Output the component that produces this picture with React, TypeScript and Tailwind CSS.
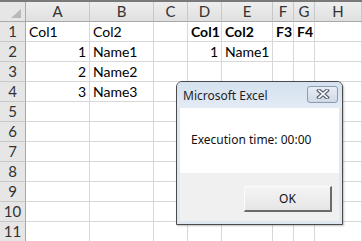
const cols = ["A", "B", "C", "D", "E", "F", "G", "H"];

type Cell = { text: string; align?: "right"; bold?: boolean };

const data: Record<number, Record<string, Cell>> = {
  1: {
    A: { text: "Col1" },
    B: { text: "Col2" },
    D: { text: "Col1", bold: true },
    E: { text: "Col2", bold: true },
    F: { text: "F3", bold: true },
    G: { text: "F4", bold: true },
  },
  2: {
    A: { text: "1", align: "right" },
    B: { text: "Name1" },
    D: { text: "1", align: "right" },
    E: { text: "Name1" },
  },
  3: { A: { text: "2", align: "right" }, B: { text: "Name2" } },
  4: { A: { text: "3", align: "right" }, B: { text: "Name3" } },
};

const rows = Array.from({ length: 11 }, (_, i) => i + 1);

function CloseGlyph() {
  return (
    <svg width="14" height="10" viewBox="0 0 14 10">
      <path d="M3 1.5 L11 8.5 M11 1.5 L3 8.5" stroke="#5d6675" strokeWidth="4" strokeLinecap="square" />
      <path d="M3 1.5 L11 8.5 M11 1.5 L3 8.5" stroke="#ffffff" strokeWidth="1.6" strokeLinecap="square" />
    </svg>
  );
}

function MessageBox() {
  return (
    <div className="absolute left-[176px] top-[81px] w-[167px] h-[144px] rounded-t-[6px] border border-[#4a4a4a] bg-[#dfe7f1] flex flex-col shadow-[1px_1px_2px_rgba(0,0,0,0.25)] font-['Noto_Sans',sans-serif]">
      <div className="h-[26px] flex items-center justify-between pl-[6px] pr-[4px] rounded-t-[5px] bg-gradient-to-b from-[#d5e1ef] to-[#e3ebf5]">
        <span className="text-[12px] text-[#1e1e1e] mt-[2px]">Microsoft Excel</span>
        <div className="w-[31px] h-[17px] rounded-[3px] border border-[#8d9bae] bg-gradient-to-b from-[#e9eef5] to-[#cfd9e6] flex items-center justify-center mb-[2px]">
          <CloseGlyph />
        </div>
      </div>
      <div className="flex-1 mx-[3px] mb-[3px] flex flex-col">
        <div className="h-[65px] bg-white flex items-center pl-[11px] pb-[2px]">
          <span className="text-[12px] text-[#111]">Execution time: 00:00</span>
        </div>
        <div className="flex-1 bg-[#f0f0f0] flex items-start justify-end pt-[13px] pr-[7px]">
          <div className="w-[88px] h-[26px] bg-gradient-to-b from-[#f4f4f4] to-[#e6e6e6] border-t border-l border-t-[#fbfbfb] border-l-[#fbfbfb] border-r-2 border-b-2 border-r-[#6b6b6b] border-b-[#6b6b6b] flex items-center justify-center text-[12px] text-[#111]">
            OK
          </div>
        </div>
      </div>
    </div>
  );
}

export default function App() {
  return (
    <div className="relative w-[362px] h-[241px] overflow-hidden bg-white font-['Lato',sans-serif]">
      <div className="h-[2px] bg-[#7a7a7a]" />
      <div className="grid grid-cols-[26px_64px_64px_34px_34px_51px_21px_21px_1fr] auto-rows-[20px]">
        <div className="relative bg-[#e6e6e6] border-r border-b border-[#a9a9a9]">
          <div className="absolute right-[4px] bottom-[3px] w-0 h-0 border-l-[10px] border-l-transparent border-b-[9px] border-b-[#b9b9b9]" />
        </div>
        {cols.map((c) => (
          <div
            key={c}
            className="bg-gradient-to-b from-[#eeeeee] to-[#e0e0e0] border-r border-r-[#c8c8c8] border-b border-b-[#a9a9a9] flex items-center justify-center text-[15px] text-[#333]"
          >
            {c}
          </div>
        ))}
        {rows.map((r) => (
          <div key={r} className="contents">
            <div className="bg-[#e6e6e6] border-r border-r-[#a9a9a9] border-b border-b-[#c8c8c8] flex items-center justify-center text-[15px] text-[#333]">
              {r}
            </div>
            {cols.map((c) => {
              const cell = data[r]?.[c];
              return (
                <div
                  key={c}
                  className={`border-r border-b border-[#d8d8d8] flex items-center px-[3px] text-[14px] text-black whitespace-nowrap ${
                    cell?.align === "right" ? "justify-end" : "justify-start"
                  } ${cell?.bold ? "font-bold" : ""}`}
                >
                  {cell?.text}
                </div>
              );
            })}
          </div>
        ))}
      </div>
      <MessageBox />
    </div>
  );
}
